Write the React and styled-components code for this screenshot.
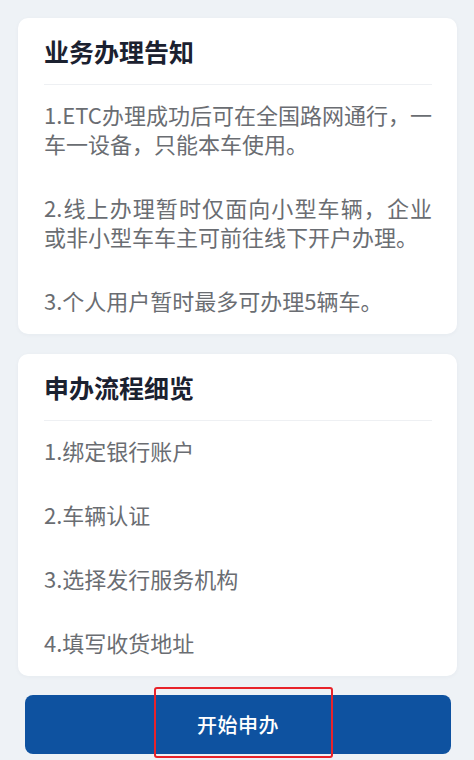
import React from "react";
import styled, { createGlobalStyle } from "styled-components";

const GlobalStyle = createGlobalStyle`
  html, body {
    margin: 0;
    padding: 0;
    background: #eef2f6;
  }
  body {
    font-family: "Noto Sans CJK SC", "Noto Sans", sans-serif;
  }
`;

const Page = styled.div`
  width: 474px;
  height: 760px;
  box-sizing: border-box;
  padding: 18px 17px 0 18px;
  display: flex;
  flex-direction: column;
  gap: 20px;
  overflow: hidden;
`;

const Card = styled.section`
  background: #fff;
  border-radius: 10px;
  padding: 17px 25px 19.5px 26px;
  box-shadow: 0 1px 4px rgba(30, 50, 80, 0.04);
`;

const Title = styled.h2`
  margin: 0;
  font-size: 25px;
  line-height: 32px;
  font-weight: 700;
  color: #1b2130;
`;

const Divider = styled.div`
  height: 1px;
  background: #eef0f3;
  margin: 17px 0 14.5px;
`;

const List = styled.div`
  display: flex;
  flex-direction: column;
  gap: 35px;
`;

const Item = styled.p`
  margin: 0;
  font-size: 22px;
  line-height: 29px;
  color: #6a6d72;
  text-align: justify;
`;

const ButtonWrap = styled.div`
  position: relative;
  margin: -1px 6px 0 7px;
`;

const StartButton = styled.button`
  width: 100%;
  height: 59px;
  border: none;
  border-radius: 8px;
  background: #0e52a0;
  color: #fff;
  font-family: "Noto Sans CJK SC", sans-serif;
  font-size: 20px;
  font-weight: 500;
  letter-spacing: 0.5px;
`;

const Highlight = styled.div`
  position: absolute;
  left: 129px;
  top: -8px;
  width: 179px;
  height: 71px;
  box-sizing: border-box;
  border: 2.5px solid #e8232a;
  border-radius: 3px;
  pointer-events: none;
`;

const notices = [
  "1.ETC办理成功后可在全国路网通行，一车一设备，只能本车使用。",
  "2.线上办理暂时仅面向小型车辆，企业或非小型车车主可前往线下开户办理。",
  "3.个人用户暂时最多可办理5辆车。",
];

const steps = ["1.绑定银行账户", "2.车辆认证", "3.选择发行服务机构", "4.填写收货地址"];

const InfoCard = ({ title, items }) => (
  <Card>
    <Title>{title}</Title>
    <Divider />
    <List>
      {items.map((text) => (
        <Item key={text}>{text}</Item>
      ))}
    </List>
  </Card>
);

const App = () => {
  return (
    <>
      <GlobalStyle />
      <Page>
        <InfoCard title="业务办理告知" items={notices} />
        <InfoCard title="申办流程细览" items={steps} />
        <ButtonWrap>
          <StartButton>开始申办</StartButton>
          <Highlight />
        </ButtonWrap>
      </Page>
    </>
  );
};

export default App;
